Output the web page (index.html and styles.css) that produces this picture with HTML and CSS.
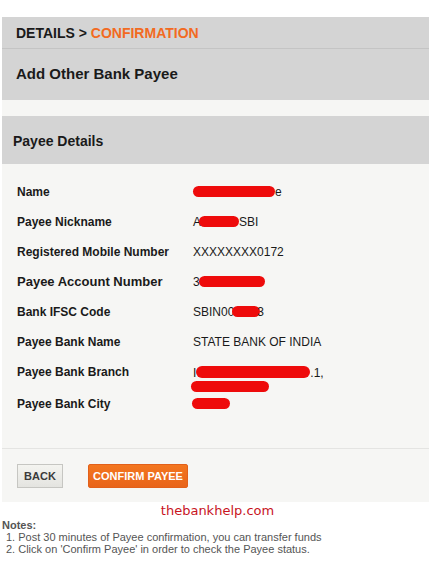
FILE: index.html
```html
<!DOCTYPE html>
<html>
<head>
<meta charset="utf-8">
<link rel="stylesheet" href="styles.css">
</head>
<body>
<div class="page">
  <div class="crumb">DETAILS &gt; <span class="crumb-active">CONFIRMATION</span></div>
  <div class="title">Add Other Bank Payee</div>
  <div class="gap"></div>
  <div class="section-head">Payee Details</div>
  <div class="panel">
    <div class="rows">
      <div class="row"><div class="label">Name</div><div class="value"><span class="red r-name"></span>e</div></div>
      <div class="row"><div class="label">Payee Nickname</div><div class="value">A<span class="red r-nick"></span>SBI</div></div>
      <div class="row"><div class="label">Registered Mobile Number</div><div class="value">XXXXXXXX0172</div></div>
      <div class="row"><div class="label label-lg">Payee Account Number</div><div class="value">3<span class="red r-acct"></span></div></div>
      <div class="row"><div class="label">Bank IFSC Code</div><div class="value">SBIN00<span class="red r-ifsc"></span>3</div></div>
      <div class="row"><div class="label">Payee Bank Name</div><div class="value">STATE BANK OF INDIA</div></div>
      <div class="row row-multi"><div class="label">Payee Bank Branch</div><div class="value">I<span class="red r-branch"></span>.1,<br><span class="red r-branch2"></span></div></div>
      <div class="row"><div class="label">Payee Bank City</div><div class="value"><span class="red r-city"></span></div></div>
    </div>
    <div class="actions">
      <button class="btn btn-back">BACK</button>
      <button class="btn btn-confirm">CONFIRM PAYEE</button>
    </div>
  </div>
  <div class="watermark">thebankhelp.com</div>
  <div class="notes">
    <div class="notes-title">Notes:</div>
    <div class="note">1. Post 30 minutes of Payee confirmation, you can transfer funds</div>
    <div class="note">2. Click on 'Confirm Payee' in order to check the Payee status.</div>
  </div>
</div>
</body>
</html>
```
FILE: styles.css
```css
html, body {
  margin: 0;
  padding: 0;
  background: #ffffff;
}
body {
  font-family: "Liberation Sans", Arial, sans-serif;
  color: #1a1a1a;
  width: 429px;
  overflow: hidden;
}
.page {
  padding-top: 17px;
  margin-left: 2px;
}
.crumb {
  background: #d4d4d4;
  height: 32px;
  box-sizing: border-box;
  border-bottom: 1px solid #c4c4c4;
  padding-left: 14px;
  font-size: 14px;
  font-weight: bold;
  line-height: 32px;
  color: #1a1a1a;
}
.crumb-active {
  color: #f26a21;
}
.title {
  background: #d4d4d4;
  height: 51px;
  padding-left: 14px;
  font-size: 15px;
  font-weight: bold;
  line-height: 50px;
  color: #1a1a1a;
}
.gap {
  height: 16px;
  background: #f6f6f4;
}
.section-head {
  background: #d4d4d4;
  height: 48px;
  padding-left: 11px;
  font-size: 14px;
  font-weight: bold;
  line-height: 50px;
}
.panel {
  background: #f6f6f4;
}
.rows {
  padding: 13px 0 29px 15px;
}
.row {
  display: flex;
  align-items: center;
  height: 30px;
  font-size: 12px;
  line-height: 14px;
}
.row-multi {
  align-items: flex-start;
  height: 32px;
  padding-top: 9px;
  box-sizing: border-box;
  line-height: 13px;
}
.label {
  width: 176px;
  font-weight: bold;
  color: #1a1a1a;
}
.label-lg {
  font-size: 13px;
}
.value {
  color: #1a1a1a;
}
.red {
  display: inline-block;
  background: #ee0b0b;
  height: 11px;
  border-radius: 6px;
  vertical-align: -1px;
}
.r-name { width: 82px; }
.r-nick { width: 40px; margin-left: -2px; }
.r-acct { width: 66px; margin-left: -1px; }
.r-ifsc { width: 28px; margin-left: -2px; margin-right: -3px; }
.r-branch { width: 114px; height: 12px; }
.r-branch2 { width: 78px; height: 11px; margin-left: -2px; margin-top: 1px; }
.r-city { width: 38px; margin-left: -1px; }
.actions {
  border-top: 1px solid #e4e4e2;
  display: flex;
  gap: 25px;
  padding: 15px 0 14px 15px;
}
.btn {
  height: 24px;
  box-sizing: border-box;
  font-family: "Liberation Sans", Arial, sans-serif;
  font-size: 11px;
  font-weight: bold;
  padding: 0;
  cursor: pointer;
}
.btn-back {
  width: 46px;
  background: linear-gradient(#f4f4f0, #e4e4e0);
  border: 1px solid #c6c6c2;
  color: #3a3a3a;
}
.btn-confirm {
  width: 100px;
  background: linear-gradient(#f3761f, #e8641a);
  border: 1px solid #e2601a;
  border-radius: 2px;
  color: #ffffff;
}
.watermark {
  text-align: center;
  font-family: "DejaVu Sans", Verdana, sans-serif;
  font-size: 13px;
  line-height: 16px;
  color: #c8141e;
  padding-top: 1px;
  padding-left: 4px;
}
.notes {
  font-size: 11px;
  color: #555555;
}
.notes-title {
  font-weight: bold;
  color: #555555;
  line-height: 12px;
  margin-bottom: 1px;
}
.note {
  padding-left: 4px;
  line-height: 11.6px;
}
```
